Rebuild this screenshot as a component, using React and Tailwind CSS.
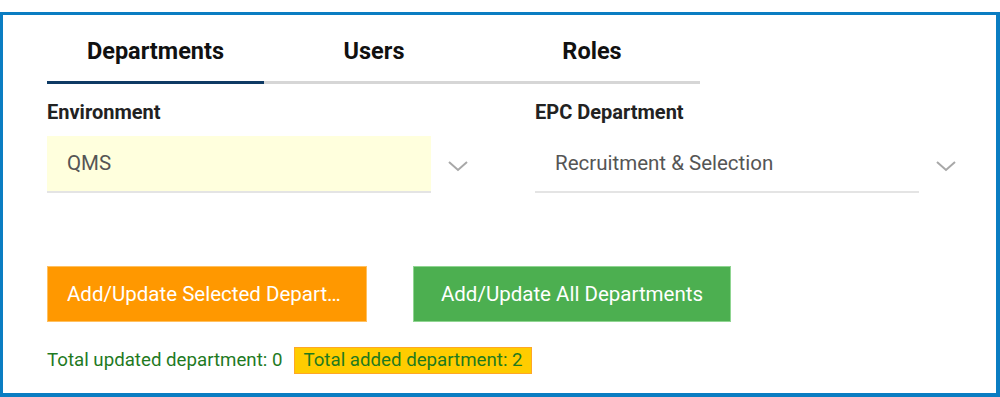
import React from "react";

function Chevron() {
  return (
    <svg width="22" height="12" viewBox="0 0 22 12" fill="none">
      <polyline points="2,2 11,10 20,2" stroke="#a8a8a8" strokeWidth="2" fill="none" />
    </svg>
  );
}

function SelectField({ label, value, bg }) {
  return (
    <div className="flex flex-col">
      <div className="text-[20px] font-bold text-[#222] leading-none h-[20px] flex items-center">{label}</div>
      <div className="flex items-center mt-[14px]">
        <div className={`w-[384px] h-[57px] flex items-center px-[20px] border-b-2 border-[#e4e4e4] text-[20.5px] text-[#555] ${bg}`}>
          {value}
        </div>
        <div className="ml-[16px] mt-[2px] flex items-center">
          <Chevron />
        </div>
      </div>
    </div>
  );
}

export default function App() {
  return (
    <div className="w-[1000px] h-[397px] bg-white pt-[12px] overflow-hidden" style={{ fontFamily: "Roboto, 'Liberation Sans', sans-serif" }}>
      <div className="h-[385px] border-[3px] border-r-[4px] border-b-[4px] border-[#0a7dc2] px-[44px]">
        <div className="flex w-[653px] mt-[17px]">
          <div className="w-[217px] flex flex-col items-center">
            <div className="h-[40px] flex items-center text-[23.5px] font-bold text-[#111]">Departments</div>
            <div className="w-full h-[3px] bg-[#0e3a64] mt-[9px]"></div>
          </div>
          <div className="w-[220px] flex flex-col items-center">
            <div className="h-[40px] flex items-center text-[23.5px] font-bold text-[#111]">Users</div>
            <div className="w-full h-[3px] bg-[#d6d6d6] mt-[9px]"></div>
          </div>
          <div className="w-[216px] flex flex-col items-center">
            <div className="h-[40px] flex items-center text-[23.5px] font-bold text-[#111]">Roles</div>
            <div className="w-full h-[3px] bg-[#d6d6d6] mt-[9px]"></div>
          </div>
        </div>
        <div className="grid grid-cols-[488px_440px] mt-[18px]">
          <SelectField label="Environment" value="QMS" bg="bg-[#ffffdd]" />
          <SelectField label="EPC Department" value="Recruitment & Selection" bg="bg-white" />
        </div>
        <div className="flex gap-[46px] mt-[73px]">
          <button className="w-[320px] h-[56px] bg-[#ff9800] text-white text-[20.5px] px-[19px] border border-[#ffc060] whitespace-nowrap text-left">
            Add/Update Selected Depart…
          </button>
          <button className="w-[318px] h-[56px] bg-[#4caf50] text-white text-[20.5px] border border-[#8fd591]">
            Add/Update All Departments
          </button>
        </div>
        <div className="flex items-center mt-[24px] text-[18.7px] text-[#1f7a1f]">
          <span>Total updated department: 0</span>
          <span className="ml-[12px] bg-[#ffcc00] border border-[#ffa726] h-[27px] px-[8px] flex items-center">Total added department: 2</span>
        </div>
      </div>
    </div>
  );
}
